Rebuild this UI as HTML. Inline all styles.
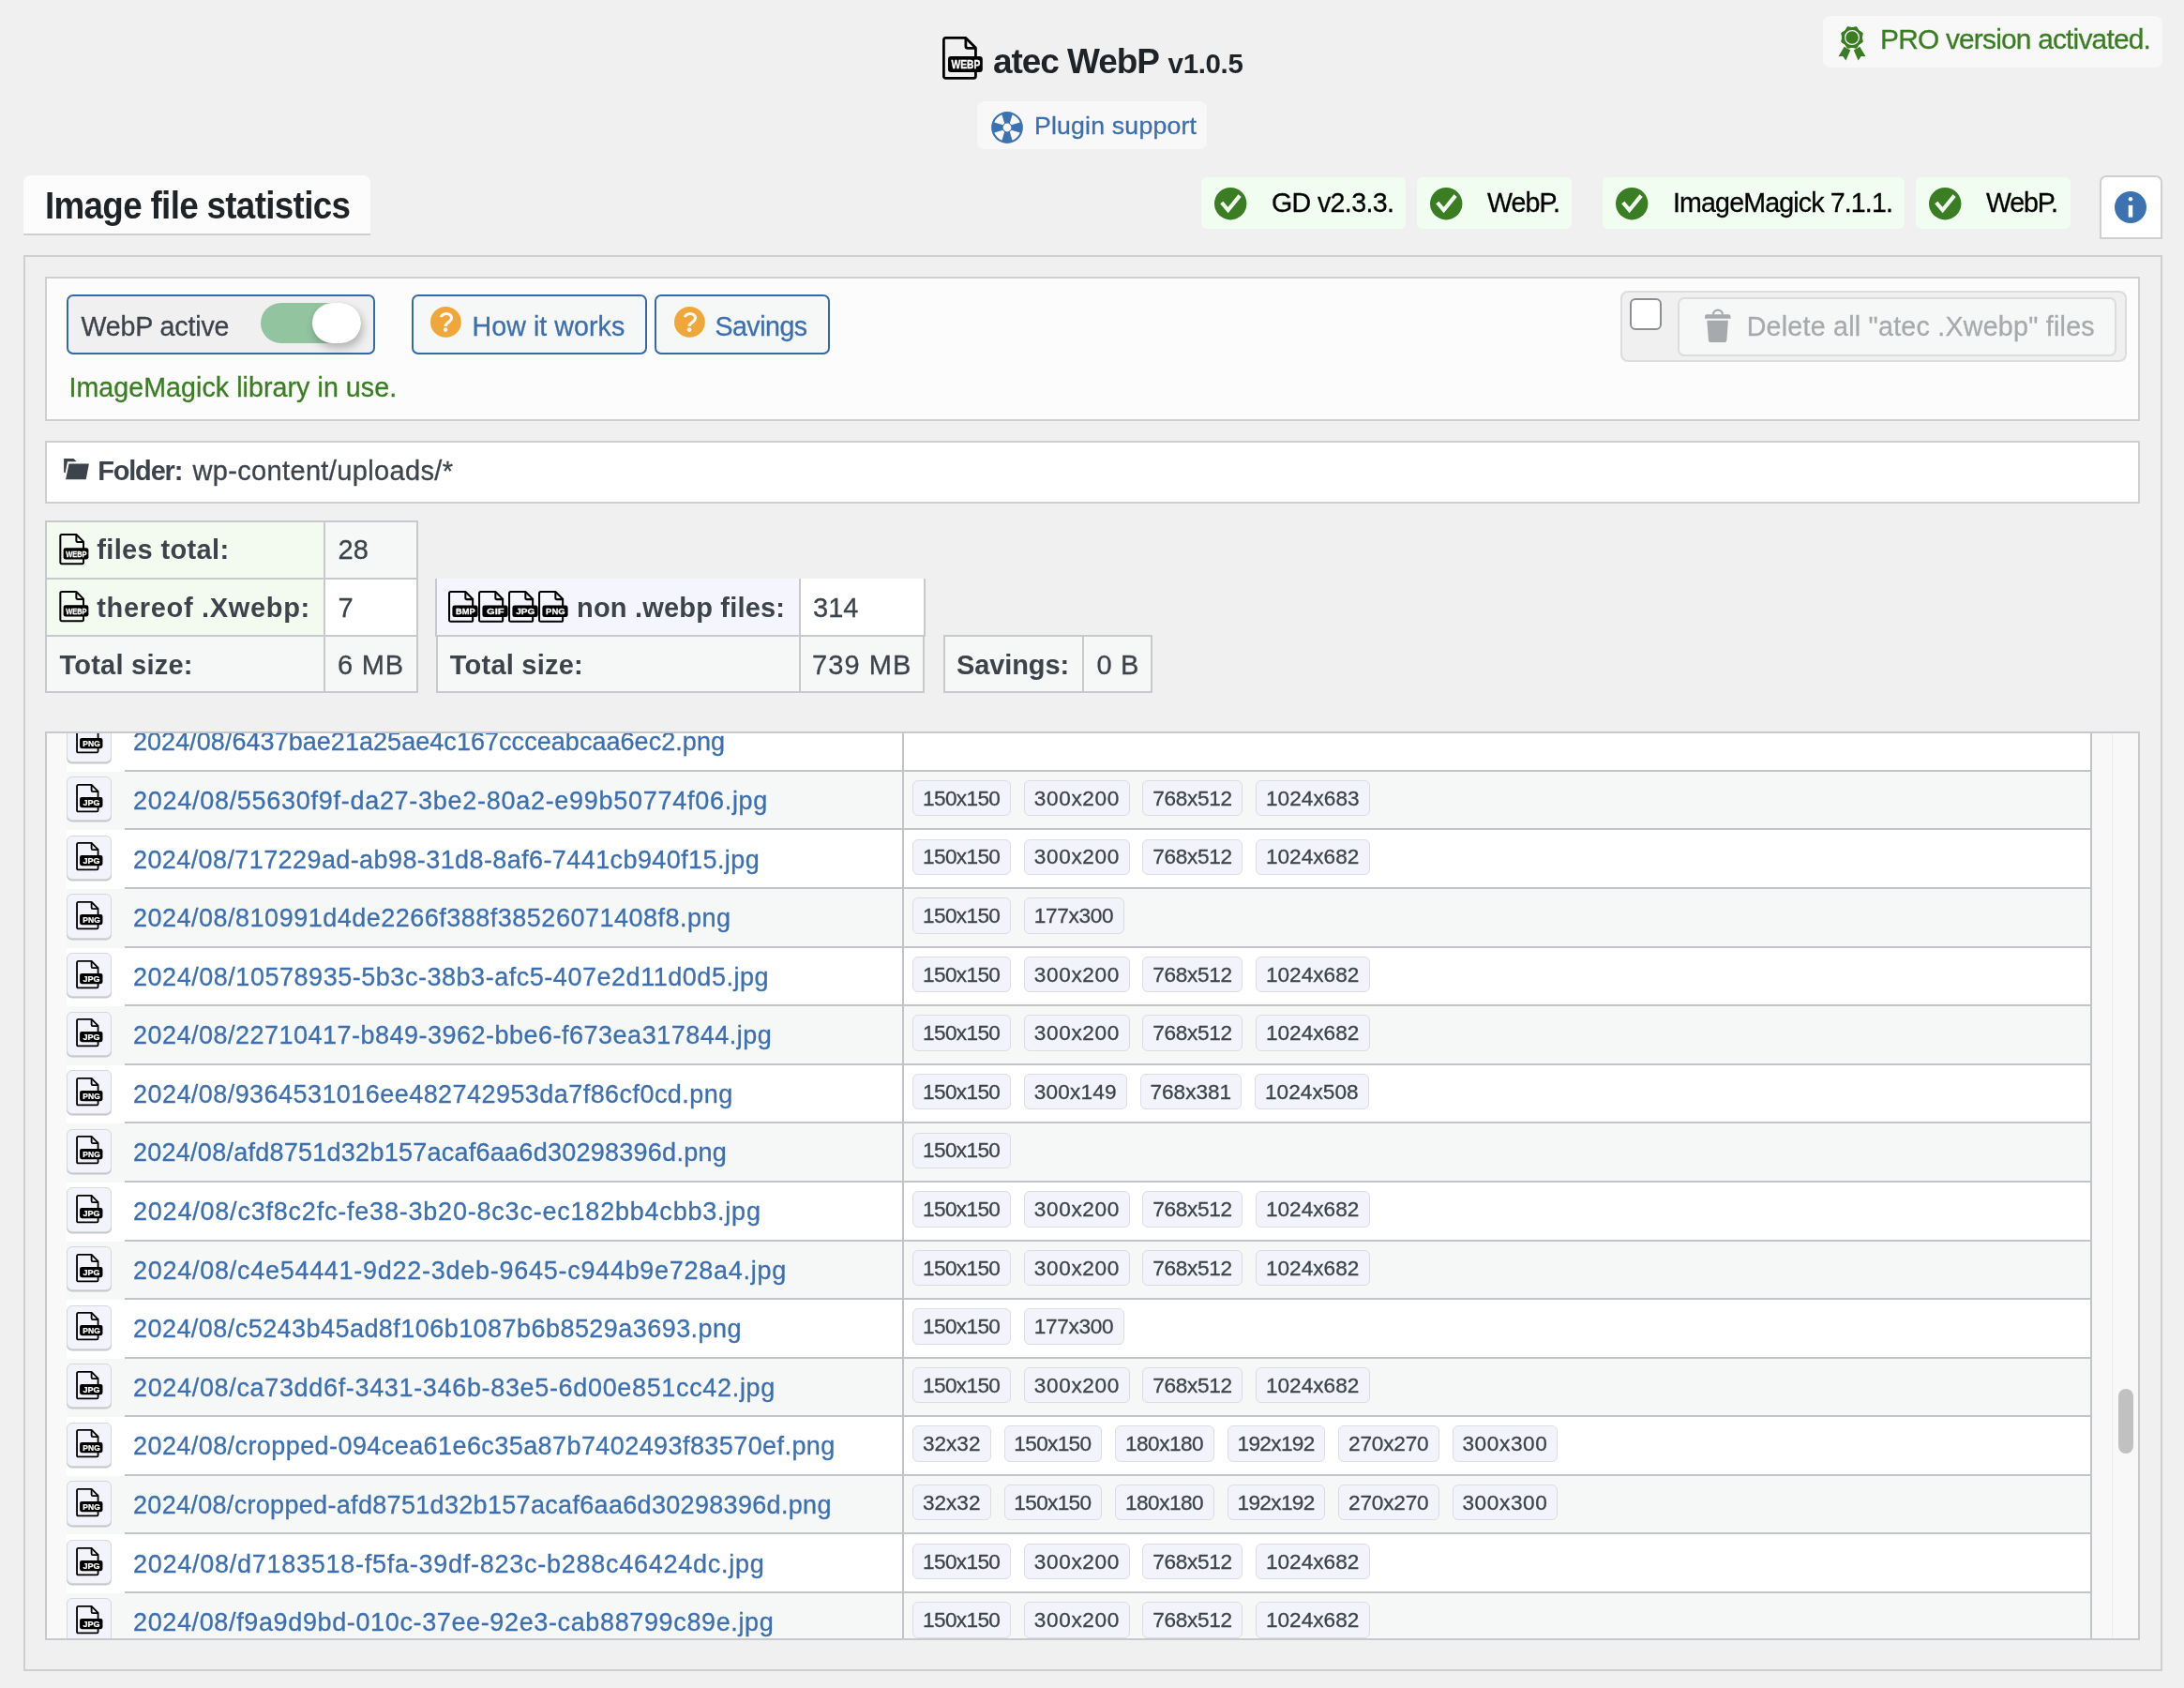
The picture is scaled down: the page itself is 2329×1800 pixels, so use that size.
<!DOCTYPE html><html><head><meta charset="utf-8"><style>
html,body{margin:0;padding:0;}
body{width:2329px;height:1800px;overflow:hidden;background:#f0f0f1;position:relative;font-family:"Liberation Sans",sans-serif;}
.t{position:absolute;white-space:pre;}
.r{position:absolute;box-sizing:border-box;}
#w{position:absolute;left:0;top:0;width:2329px;height:1800px;will-change:transform;}
</style></head><body><div id="w"><svg class="r" style="left:1004.6px;top:39.1px;overflow:visible;overflow:visible" width="42.8" height="45.8" viewBox="0 0 43 46"><path d="M3.4,1.4 H25 L35.6,12 V42.4 Q35.6,44.6 33.4,44.6 H3.6 Q1.4,44.6 1.4,42.4 V3.6 Q1.4,1.4 3.6,1.4 Z" fill="none" stroke="#000" stroke-width="2.8" stroke-linejoin="round"/><path d="M25,1.4 V10.2 Q25,12.4 27.2,12.4 H35.6" fill="none" stroke="#000" stroke-width="2.8" stroke-linejoin="round"/><rect x="6" y="21.2" width="37" height="17" rx="3.2" fill="#000"/><text x="25" y="34.6" text-anchor="middle" font-family="Liberation Sans" font-weight="700" font-size="12.8" textLength="31" lengthAdjust="spacingAndGlyphs" fill="#fff" stroke="#fff" stroke-width="0.35">WEBP</text></svg>
<div class="t" style="left:1059.00px;top:46.97px;font-size:37px;line-height:37px;font-weight:700;color:#1d2327;letter-spacing:-1.050px;">atec WebP</div>
<div class="t" style="left:1245.60px;top:53.32px;font-size:29.5px;line-height:29.5px;font-weight:700;color:#1d2327;letter-spacing:-0.360px;">v1.0.5</div>
<div class="r" style="left:1042px;top:108px;width:245px;height:51px;background:#f8f8f8;border-radius:8px;"></div>
<svg class="r" style="left:1057.2px;top:119.30000000000001px;overflow:visible;" width="34" height="34" viewBox="-17 -17 34 34"><circle cx="0" cy="0" r="16.9" fill="#3d72b0"/><path transform="rotate(0)" d="M5.6,-13.7 A14.8,14.8 0 0 1 13.7,-5.6 L4.5,-2.8 A5.3,5.3 0 0 0 2.8,-4.5 Z" fill="#f8f8f8"/><path transform="rotate(90)" d="M5.6,-13.7 A14.8,14.8 0 0 1 13.7,-5.6 L4.5,-2.8 A5.3,5.3 0 0 0 2.8,-4.5 Z" fill="#f8f8f8"/><path transform="rotate(180)" d="M5.6,-13.7 A14.8,14.8 0 0 1 13.7,-5.6 L4.5,-2.8 A5.3,5.3 0 0 0 2.8,-4.5 Z" fill="#f8f8f8"/><path transform="rotate(270)" d="M5.6,-13.7 A14.8,14.8 0 0 1 13.7,-5.6 L4.5,-2.8 A5.3,5.3 0 0 0 2.8,-4.5 Z" fill="#f8f8f8"/><circle cx="0" cy="0" r="4.4" fill="#f8f8f8"/></svg>
<div class="t" style="left:1103.00px;top:120.79px;font-size:26.7px;line-height:26.7px;font-weight:400;color:#3c6fb0;letter-spacing:0.177px;-webkit-text-stroke:0.3px;">Plugin support</div>
<div class="r" style="left:1944px;top:17px;width:362px;height:55px;background:#f8f8f8;border-radius:8px;"></div>
<svg class="r" style="left:1958.6px;top:26.799999999999997px;overflow:visible;" width="32" height="40" viewBox="-16 -13 32 40"><polygon points="-8.3,9.8 -1.8,13.4 -6.6,24.6 -9.8,19.9 -14.5,20.2" fill="#3a7d22"/><polygon points="8.3,9.8 1.8,13.4 6.6,24.6 9.8,19.9 14.5,20.2" fill="#3a7d22"/><polygon points="0.00,-10.40 4.67,-11.27 7.35,-7.35 11.27,-4.67 10.40,-0.00 11.27,4.67 7.35,7.35 4.67,11.27 0.00,10.40 -4.67,11.27 -7.35,7.35 -11.27,4.67 -10.40,0.00 -11.27,-4.67 -7.35,-7.35 -4.67,-11.27" fill="#3a7d22" stroke="#f8f8f8" stroke-width="1.3" stroke-linejoin="round" paint-order="stroke"/><polygon points="0.00,-10.40 4.67,-11.27 7.35,-7.35 11.27,-4.67 10.40,-0.00 11.27,4.67 7.35,7.35 4.67,11.27 0.00,10.40 -4.67,11.27 -7.35,7.35 -11.27,4.67 -10.40,0.00 -11.27,-4.67 -7.35,-7.35 -4.67,-11.27" fill="#3a7d22" stroke="#3a7d22" stroke-width="1" stroke-linejoin="round"/><circle cx="0" cy="0" r="7.4" fill="none" stroke="#f8f8f8" stroke-width="1.3"/></svg>
<div class="t" style="left:2005.00px;top:27.48px;font-size:29.9px;line-height:29.9px;font-weight:400;color:#3a7d22;letter-spacing:-0.800px;-webkit-text-stroke:0.3px;">PRO version activated.</div>
<div class="r" style="left:25px;top:187px;width:370px;height:64px;background:#fcfcfc;border-top-left-radius:8px;border-top-right-radius:8px;border-bottom:2px solid #cfcfcf;"></div>
<div class="t" style="left:47.60px;top:198.73px;font-size:40px;line-height:40px;font-weight:700;color:#1d2327;letter-spacing:-0.738px;transform:scaleX(0.92);transform-origin:0 0;">Image file statistics</div>
<div class="r" style="left:1281px;top:189px;width:218px;height:55px;background:#f1fdf0;border-radius:6px;"></div>
<svg class="r" style="left:1295.3px;top:200.0px;overflow:visible;" width="34.4" height="34.4" viewBox="-17.2 -17.2 34.4 34.4"><circle cx="0" cy="0" r="17.2" fill="#3a7d22"/><polyline points="-9.4,-1.2 -2.6,6.8 9.9,-8.6" fill="none" stroke="#f1fdf0" stroke-width="4.2" stroke-linejoin="miter" stroke-miterlimit="4"/></svg>
<div class="t" style="left:1356.00px;top:201.78px;font-size:28.6px;line-height:28.6px;font-weight:400;color:#000;letter-spacing:-0.633px;-webkit-text-stroke:0.3px;">GD v2.3.3.</div>
<div class="r" style="left:1511px;top:189px;width:165px;height:55px;background:#f1fdf0;border-radius:6px;"></div>
<svg class="r" style="left:1525.3999999999999px;top:200.0px;overflow:visible;" width="34.4" height="34.4" viewBox="-17.2 -17.2 34.4 34.4"><circle cx="0" cy="0" r="17.2" fill="#3a7d22"/><polyline points="-9.4,-1.2 -2.6,6.8 9.9,-8.6" fill="none" stroke="#f1fdf0" stroke-width="4.2" stroke-linejoin="miter" stroke-miterlimit="4"/></svg>
<div class="t" style="left:1586.00px;top:201.78px;font-size:28.6px;line-height:28.6px;font-weight:400;color:#000;letter-spacing:-0.900px;-webkit-text-stroke:0.3px;">WebP.</div>
<div class="r" style="left:1709px;top:189px;width:322px;height:55px;background:#f1fdf0;border-radius:6px;"></div>
<svg class="r" style="left:1723.3px;top:200.0px;overflow:visible;" width="34.4" height="34.4" viewBox="-17.2 -17.2 34.4 34.4"><circle cx="0" cy="0" r="17.2" fill="#3a7d22"/><polyline points="-9.4,-1.2 -2.6,6.8 9.9,-8.6" fill="none" stroke="#f1fdf0" stroke-width="4.2" stroke-linejoin="miter" stroke-miterlimit="4"/></svg>
<div class="t" style="left:1784.00px;top:201.78px;font-size:28.6px;line-height:28.6px;font-weight:400;color:#000;letter-spacing:-0.859px;-webkit-text-stroke:0.3px;">ImageMagick 7.1.1.</div>
<div class="r" style="left:2043px;top:189px;width:165px;height:55px;background:#f1fdf0;border-radius:6px;"></div>
<svg class="r" style="left:2056.8px;top:200.0px;overflow:visible;" width="34.4" height="34.4" viewBox="-17.2 -17.2 34.4 34.4"><circle cx="0" cy="0" r="17.2" fill="#3a7d22"/><polyline points="-9.4,-1.2 -2.6,6.8 9.9,-8.6" fill="none" stroke="#f1fdf0" stroke-width="4.2" stroke-linejoin="miter" stroke-miterlimit="4"/></svg>
<div class="t" style="left:2118.00px;top:201.78px;font-size:28.6px;line-height:28.6px;font-weight:400;color:#000;letter-spacing:-1.150px;-webkit-text-stroke:0.3px;">WebP.</div>
<div class="r" style="left:2239px;top:187px;width:67px;height:68px;background:#fff;border:2px solid #cfcfcf;border-top-left-radius:7px;border-top-right-radius:7px;"></div>
<svg class="r" style="left:2255px;top:204.2px;overflow:visible;" width="34" height="34" viewBox="-17 -17 34 34"><circle r="17" fill="#3d72b0"/><circle cx="0" cy="-8.7" r="2.2" fill="#fff"/><rect x="-2.3" y="-2.2" width="4.6" height="12.8" fill="#fff"/></svg>
<div class="r" style="left:25px;top:272px;width:2281px;height:1510px;border:2px solid #cfcfcf;"></div>
<div class="r" style="left:48px;top:295px;width:2234px;height:154px;background:#fcfcfc;border:2px solid #cfcfcf;"></div>
<div class="r" style="left:71px;top:314px;width:329px;height:64px;background:#f0f0f1;border:2px solid #3469ab;border-radius:7px;"></div>
<div class="t" style="left:86.50px;top:333.78px;font-size:28.6px;line-height:28.6px;font-weight:400;color:#3c434a;letter-spacing:-0.150px;-webkit-text-stroke:0.3px;">WebP active</div>
<div class="r" style="left:278px;top:323.4px;width:107px;height:43.10000000000002px;background:#92c4a0;border-radius:22px;"></div>
<div class="r" style="left:333px;top:323.4px;width:52px;height:43.10000000000002px;background:#fff;border-radius:21.5px;box-shadow:2px 5px 10px rgba(0,0,0,0.26);"></div>
<div class="r" style="left:438.5px;top:314px;width:251.0px;height:64px;background:#f6f7f7;border:2px solid #3469ab;border-radius:7px;"></div>
<svg class="r" style="left:459.40000000000003px;top:326.70000000000005px;overflow:visible;" width="32.8" height="32.8" viewBox="-16.4 -16.4 32.8 32.8"><circle cx="0" cy="0" r="16.4" fill="#f0a73a"/><path d="M-5.0,-5.2 C-4.0,-9.0 1.5,-10.0 4.5,-7.6 C7.2,-5.4 6.4,-2.2 3.5,-0.2 C0.9,1.6 -0.3,2.4 -0.4,4.4" fill="none" stroke="#f6f7f7" stroke-width="3.1"/><circle cx="-0.3" cy="8.2" r="2.3" fill="#f6f7f7"/></svg>
<div class="t" style="left:503.60px;top:333.78px;font-size:28.6px;line-height:28.6px;font-weight:400;color:#3c6fb0;letter-spacing:0.055px;-webkit-text-stroke:0.3px;">How it works</div>
<div class="r" style="left:698px;top:314px;width:187px;height:64px;background:#f6f7f7;border:2px solid #3469ab;border-radius:7px;"></div>
<svg class="r" style="left:719.2px;top:326.70000000000005px;overflow:visible;" width="32.8" height="32.8" viewBox="-16.4 -16.4 32.8 32.8"><circle cx="0" cy="0" r="16.4" fill="#f0a73a"/><path d="M-5.0,-5.2 C-4.0,-9.0 1.5,-10.0 4.5,-7.6 C7.2,-5.4 6.4,-2.2 3.5,-0.2 C0.9,1.6 -0.3,2.4 -0.4,4.4" fill="none" stroke="#f6f7f7" stroke-width="3.1"/><circle cx="-0.3" cy="8.2" r="2.3" fill="#f6f7f7"/></svg>
<div class="t" style="left:762.40px;top:333.78px;font-size:28.6px;line-height:28.6px;font-weight:400;color:#3c6fb0;letter-spacing:-0.500px;-webkit-text-stroke:0.3px;">Savings</div>
<div class="t" style="left:73.40px;top:398.58px;font-size:28.6px;line-height:28.6px;font-weight:400;color:#3a7d22;letter-spacing:0.065px;-webkit-text-stroke:0.3px;">ImageMagick library in use.</div>
<div class="r" style="left:1728px;top:310px;width:540px;height:76px;background:#f0f0f1;border:2px solid #dcdcde;border-radius:8px;"></div>
<div class="r" style="left:1738px;top:318px;width:34px;height:34px;background:#fff;border:2px solid #8c8f94;border-radius:6px;"></div>
<div class="r" style="left:1789px;top:316.5px;width:468px;height:63.0px;background:#f6f7f7;border:2px solid #dcdcde;border-radius:7px;"></div>
<svg class="r" style="left:1817px;top:330px;overflow:visible;" width="30" height="36" viewBox="1817 330 30 36"><path d="M1826.9,335.6 A5.05,5.05 0 0 1 1837,335.6" fill="none" stroke="#a7aaad" stroke-width="2.2"/><path d="M1818,339.7 V337.5 Q1818,335.3 1820.2,335.3 H1843.3 Q1845.5,335.3 1845.5,337.5 V339.7 Z" fill="#a7aaad"/><path d="M1820.3,341.8 H1842.9 L1841.4,362.4 Q1841.2,365 1838.6,365 H1824.7 Q1822.1,365 1821.9,362.4 Z" fill="#a7aaad"/></svg>
<div class="t" style="left:1862.70px;top:333.58px;font-size:28.6px;line-height:28.6px;font-weight:400;color:#a7aaad;letter-spacing:0.252px;-webkit-text-stroke:0.3px;">Delete all "atec .Xwebp" files</div>
<div class="r" style="left:48px;top:470px;width:2234px;height:67px;background:#fff;border:2px solid #cfcfcf;"></div>
<svg class="r" style="left:66px;top:486px;overflow:visible;" width="32" height="28" viewBox="66 486 32 28"><path d="M68.1,489 H78.6 L81.6,492.3 H72 L69.6,504.4 L68.1,503.6 Z" fill="#3c434a"/><path d="M73.5,494.4 H94.9 L91.7,511.2 H70.1 Z" fill="#3c434a"/></svg>
<div class="t" style="left:104.20px;top:487.55px;font-size:29px;line-height:29px;font-weight:700;color:#3c434a;letter-spacing:-1.183px;">Folder:</div>
<div class="t" style="left:205.40px;top:487.55px;font-size:29px;line-height:29px;font-weight:400;color:#3c434a;letter-spacing:0.353px;-webkit-text-stroke:0.3px;">wp-content/uploads/*</div>
<div class="r" style="left:48px;top:554.5px;width:299px;height:63.0px;background:#f3fbf0;border:2px solid #c8c9cc;"></div>
<div class="r" style="left:345px;top:554.5px;width:101px;height:63.0px;background:#f6f7f7;border:2px solid #c8c9cc;"></div>
<div class="r" style="left:48px;top:615.5px;width:299px;height:63.5px;background:#f3fbf0;border:2px solid #c8c9cc;"></div>
<div class="r" style="left:345px;top:615.5px;width:101px;height:63.5px;background:#ffffff;border:2px solid #c8c9cc;"></div>
<div class="r" style="left:48px;top:677px;width:299px;height:62px;background:#f6f7f7;border:2px solid #c8c9cc;"></div>
<div class="r" style="left:345px;top:677px;width:101px;height:62px;background:#f6f7f7;border:2px solid #c8c9cc;"></div>
<svg class="r" style="left:62.8px;top:568.8px;overflow:visible;overflow:visible" width="31.7" height="33.2" viewBox="0 0 43 46"><path d="M3.4,1.4 H25 L35.6,12 V42.4 Q35.6,44.6 33.4,44.6 H3.6 Q1.4,44.6 1.4,42.4 V3.6 Q1.4,1.4 3.6,1.4 Z" fill="none" stroke="#000" stroke-width="2.8" stroke-linejoin="round"/><path d="M25,1.4 V10.2 Q25,12.4 27.2,12.4 H35.6" fill="none" stroke="#000" stroke-width="2.8" stroke-linejoin="round"/><rect x="6" y="21.2" width="37" height="17" rx="3.2" fill="#000"/><text x="25" y="34.6" text-anchor="middle" font-family="Liberation Sans" font-weight="700" font-size="12.8" textLength="31" lengthAdjust="spacingAndGlyphs" fill="#fff" stroke="#fff" stroke-width="0.35">WEBP</text></svg>
<div class="t" style="left:103.20px;top:572.45px;font-size:29px;line-height:29px;font-weight:700;color:#3c434a;letter-spacing:0.364px;">files total:</div>
<div class="t" style="left:360.50px;top:572.45px;font-size:29px;line-height:29px;font-weight:400;color:#3c434a;letter-spacing:0.000px;-webkit-text-stroke:0.3px;">28</div>
<svg class="r" style="left:62.8px;top:629.5px;overflow:visible;overflow:visible" width="31.7" height="33.2" viewBox="0 0 43 46"><path d="M3.4,1.4 H25 L35.6,12 V42.4 Q35.6,44.6 33.4,44.6 H3.6 Q1.4,44.6 1.4,42.4 V3.6 Q1.4,1.4 3.6,1.4 Z" fill="none" stroke="#000" stroke-width="2.8" stroke-linejoin="round"/><path d="M25,1.4 V10.2 Q25,12.4 27.2,12.4 H35.6" fill="none" stroke="#000" stroke-width="2.8" stroke-linejoin="round"/><rect x="6" y="21.2" width="37" height="17" rx="3.2" fill="#000"/><text x="25" y="34.6" text-anchor="middle" font-family="Liberation Sans" font-weight="700" font-size="12.8" textLength="31" lengthAdjust="spacingAndGlyphs" fill="#fff" stroke="#fff" stroke-width="0.35">WEBP</text></svg>
<div class="t" style="left:103.20px;top:633.65px;font-size:29px;line-height:29px;font-weight:700;color:#3c434a;letter-spacing:0.679px;">thereof .Xwebp:</div>
<div class="t" style="left:360.50px;top:633.65px;font-size:29px;line-height:29px;font-weight:400;color:#3c434a;letter-spacing:0.000px;-webkit-text-stroke:0.3px;">7</div>
<div class="t" style="left:63.50px;top:694.95px;font-size:29px;line-height:29px;font-weight:700;color:#3c434a;letter-spacing:0.230px;">Total size:</div>
<div class="t" style="left:360.00px;top:694.95px;font-size:29px;line-height:29px;font-weight:400;color:#3c434a;letter-spacing:0.767px;-webkit-text-stroke:0.3px;">6 MB</div>
<div class="r" style="left:464px;top:617px;width:390px;height:62px;background:#f5f5fe;border:2px solid #c8c9cc;border-top:none;"></div>
<div class="r" style="left:852px;top:617px;width:135px;height:62px;background:#ffffff;border:2px solid #c8c9cc;border-top:none;"></div>
<div class="r" style="left:464.5px;top:677px;width:389.5px;height:62px;background:#f6f7f7;border:2px solid #c8c9cc;"></div>
<div class="r" style="left:852px;top:677px;width:134px;height:62px;background:#f6f7f7;border:2px solid #c8c9cc;"></div>
<svg class="r" style="left:478.2px;top:630.2px;overflow:visible;overflow:visible" width="31.6" height="33.8" viewBox="0 0 43 46"><path d="M3.4,1.4 H25 L35.6,12 V42.4 Q35.6,44.6 33.4,44.6 H3.6 Q1.4,44.6 1.4,42.4 V3.6 Q1.4,1.4 3.6,1.4 Z" fill="none" stroke="#000" stroke-width="2.8" stroke-linejoin="round"/><path d="M25,1.4 V10.2 Q25,12.4 27.2,12.4 H35.6" fill="none" stroke="#000" stroke-width="2.8" stroke-linejoin="round"/><rect x="6" y="21.2" width="37" height="17" rx="3.2" fill="#000"/><text x="25" y="34.6" text-anchor="middle" font-family="Liberation Sans" font-weight="700" font-size="12.8" textLength="28" lengthAdjust="spacingAndGlyphs" fill="#fff" stroke="#fff" stroke-width="0.35">BMP</text></svg>
<svg class="r" style="left:510.09999999999997px;top:630.2px;overflow:visible;overflow:visible" width="31.6" height="33.8" viewBox="0 0 43 46"><path d="M3.4,1.4 H25 L35.6,12 V42.4 Q35.6,44.6 33.4,44.6 H3.6 Q1.4,44.6 1.4,42.4 V3.6 Q1.4,1.4 3.6,1.4 Z" fill="none" stroke="#000" stroke-width="2.8" stroke-linejoin="round"/><path d="M25,1.4 V10.2 Q25,12.4 27.2,12.4 H35.6" fill="none" stroke="#000" stroke-width="2.8" stroke-linejoin="round"/><rect x="6" y="21.2" width="37" height="17" rx="3.2" fill="#000"/><text x="25" y="34.6" text-anchor="middle" font-family="Liberation Sans" font-weight="700" font-size="12.8" textLength="25.2" lengthAdjust="spacingAndGlyphs" fill="#fff" stroke="#fff" stroke-width="0.35">GIF</text></svg>
<svg class="r" style="left:542.0px;top:630.2px;overflow:visible;overflow:visible" width="31.6" height="33.8" viewBox="0 0 43 46"><path d="M3.4,1.4 H25 L35.6,12 V42.4 Q35.6,44.6 33.4,44.6 H3.6 Q1.4,44.6 1.4,42.4 V3.6 Q1.4,1.4 3.6,1.4 Z" fill="none" stroke="#000" stroke-width="2.8" stroke-linejoin="round"/><path d="M25,1.4 V10.2 Q25,12.4 27.2,12.4 H35.6" fill="none" stroke="#000" stroke-width="2.8" stroke-linejoin="round"/><rect x="6" y="21.2" width="37" height="17" rx="3.2" fill="#000"/><text x="25" y="34.6" text-anchor="middle" font-family="Liberation Sans" font-weight="700" font-size="12.8" textLength="27.6" lengthAdjust="spacingAndGlyphs" fill="#fff" stroke="#fff" stroke-width="0.35">JPG</text></svg>
<svg class="r" style="left:573.9px;top:630.2px;overflow:visible;overflow:visible" width="31.6" height="33.8" viewBox="0 0 43 46"><path d="M3.4,1.4 H25 L35.6,12 V42.4 Q35.6,44.6 33.4,44.6 H3.6 Q1.4,44.6 1.4,42.4 V3.6 Q1.4,1.4 3.6,1.4 Z" fill="none" stroke="#000" stroke-width="2.8" stroke-linejoin="round"/><path d="M25,1.4 V10.2 Q25,12.4 27.2,12.4 H35.6" fill="none" stroke="#000" stroke-width="2.8" stroke-linejoin="round"/><rect x="6" y="21.2" width="37" height="17" rx="3.2" fill="#000"/><text x="25" y="34.6" text-anchor="middle" font-family="Liberation Sans" font-weight="700" font-size="12.8" textLength="28" lengthAdjust="spacingAndGlyphs" fill="#fff" stroke="#fff" stroke-width="0.35">PNG</text></svg>
<div class="t" style="left:615.00px;top:633.65px;font-size:29px;line-height:29px;font-weight:700;color:#3c434a;letter-spacing:0.193px;">non .webp files:</div>
<div class="t" style="left:867.00px;top:633.65px;font-size:29px;line-height:29px;font-weight:400;color:#3c434a;letter-spacing:0.000px;-webkit-text-stroke:0.3px;">314</div>
<div class="t" style="left:479.80px;top:694.95px;font-size:29px;line-height:29px;font-weight:700;color:#3c434a;letter-spacing:0.230px;">Total size:</div>
<div class="t" style="left:866.00px;top:694.95px;font-size:29px;line-height:29px;font-weight:400;color:#3c434a;letter-spacing:1.080px;-webkit-text-stroke:0.3px;">739 MB</div>
<div class="r" style="left:1005.5px;top:677px;width:150.5px;height:62px;background:#f6f7f7;border:2px solid #c8c9cc;"></div>
<div class="r" style="left:1154px;top:677px;width:75px;height:62px;background:#f6f7f7;border:2px solid #c8c9cc;"></div>
<div class="t" style="left:1020.00px;top:694.95px;font-size:29px;line-height:29px;font-weight:700;color:#3c434a;letter-spacing:-0.100px;">Savings:</div>
<div class="t" style="left:1169.50px;top:694.95px;font-size:29px;line-height:29px;font-weight:400;color:#3c434a;letter-spacing:0.600px;-webkit-text-stroke:0.3px;">0 B</div>
<div class="r" style="left:48px;top:780px;width:2234px;height:969px;background:#f9f9f9;border:2px solid #c8c9cc;"></div>
<div class="r" style="left:50px;top:782px;width:2230px;height:965px;overflow:hidden;">
<div class="r" style="left:21px;top:-21.790000000000077px;width:2160px;height:62.59000000000003px;background:#ffffff;"></div>
<div class="r" style="left:83px;top:38.799999999999955px;width:830px;height:2.0px;background:#c3c4c7;"></div>
<div class="r" style="left:913px;top:38.799999999999955px;width:1268px;height:2.0px;background:#c3c4c7;"></div>
<div class="r" style="left:21.200000000000003px;top:-16.3900000000001px;width:47.39999999999999px;height:47.30000000000007px;background:#f3f3fb;border:1.5px solid #d6d7da;border-radius:6px;box-shadow:0 1.5px 0 #c6c7ca;"></div>
<svg class="r" style="left:31.200000000000003px;top:-8.690000000000055px;overflow:visible;overflow:visible" width="28.6" height="30.3" viewBox="0 0 43 46"><path d="M3.4,1.4 H25 L35.6,12 V42.4 Q35.6,44.6 33.4,44.6 H3.6 Q1.4,44.6 1.4,42.4 V3.6 Q1.4,1.4 3.6,1.4 Z" fill="none" stroke="#000" stroke-width="2.8" stroke-linejoin="round"/><path d="M25,1.4 V10.2 Q25,12.4 27.2,12.4 H35.6" fill="none" stroke="#000" stroke-width="2.8" stroke-linejoin="round"/><rect x="6" y="21.2" width="37" height="17" rx="3.2" fill="#000"/><text x="25" y="34.6" text-anchor="middle" font-family="Liberation Sans" font-weight="700" font-size="12.8" textLength="28" lengthAdjust="spacingAndGlyphs" fill="#fff" stroke="#fff" stroke-width="0.35">PNG</text></svg>
<div class="t" style="left:92.00px;top:-3.65px;font-size:27px;line-height:27px;font-weight:400;color:#3c6fb0;letter-spacing:0.044px;-webkit-text-stroke:0.3px;">2024/08/6437bae21a25ae4c167ccceabcaa6ec2.png</div>
<div class="r" style="left:21px;top:40.799999999999955px;width:2160px;height:62.59000000000003px;background:#f6f7f7;"></div>
<div class="r" style="left:83px;top:101.38999999999999px;width:830px;height:2.0px;background:#c3c4c7;"></div>
<div class="r" style="left:913px;top:101.38999999999999px;width:1268px;height:2.0px;background:#c3c4c7;"></div>
<div class="r" style="left:21.200000000000003px;top:46.19999999999993px;width:47.39999999999999px;height:47.30000000000007px;background:#f3f3fb;border:1.5px solid #d6d7da;border-radius:6px;box-shadow:0 1.5px 0 #c6c7ca;"></div>
<svg class="r" style="left:31.200000000000003px;top:53.89999999999998px;overflow:visible;overflow:visible" width="28.6" height="30.3" viewBox="0 0 43 46"><path d="M3.4,1.4 H25 L35.6,12 V42.4 Q35.6,44.6 33.4,44.6 H3.6 Q1.4,44.6 1.4,42.4 V3.6 Q1.4,1.4 3.6,1.4 Z" fill="none" stroke="#000" stroke-width="2.8" stroke-linejoin="round"/><path d="M25,1.4 V10.2 Q25,12.4 27.2,12.4 H35.6" fill="none" stroke="#000" stroke-width="2.8" stroke-linejoin="round"/><rect x="6" y="21.2" width="37" height="17" rx="3.2" fill="#000"/><text x="25" y="34.6" text-anchor="middle" font-family="Liberation Sans" font-weight="700" font-size="12.8" textLength="27.6" lengthAdjust="spacingAndGlyphs" fill="#fff" stroke="#fff" stroke-width="0.35">JPG</text></svg>
<div class="t" style="left:92.00px;top:58.94px;font-size:27px;line-height:27px;font-weight:400;color:#3c6fb0;letter-spacing:0.719px;-webkit-text-stroke:0.3px;">2024/08/55630f9f-da27-3be2-80a2-e99b50774f06.jpg</div>
<div class="r" style="left:923.3px;top:50.0px;width:104.79999999999995px;height:38.39999999999998px;background:#f2f3fb;border:1.5px solid #dcdde0;border-radius:6px;"></div>
<div class="t" style="left:934.10px;top:58.86px;font-size:22.6px;line-height:22.6px;font-weight:400;color:#3c434a;letter-spacing:-0.650px;-webkit-text-stroke:0.3px;">150x150</div>
<div class="r" style="left:1041.8999999999999px;top:50.0px;width:112.70000000000005px;height:38.39999999999998px;background:#f2f3fb;border:1.5px solid #dcdde0;border-radius:6px;"></div>
<div class="t" style="left:1052.70px;top:58.86px;font-size:22.6px;line-height:22.6px;font-weight:400;color:#3c434a;letter-spacing:0.667px;-webkit-text-stroke:0.3px;">300x200</div>
<div class="r" style="left:1168.3999999999999px;top:50.0px;width:106.90000000000009px;height:38.39999999999998px;background:#f2f3fb;border:1.5px solid #dcdde0;border-radius:6px;"></div>
<div class="t" style="left:1179.20px;top:58.86px;font-size:22.6px;line-height:22.6px;font-weight:400;color:#3c434a;letter-spacing:-0.300px;-webkit-text-stroke:0.3px;">768x512</div>
<div class="r" style="left:1289.1px;top:50.0px;width:121.79999999999995px;height:38.39999999999998px;background:#f2f3fb;border:1.5px solid #dcdde0;border-radius:6px;"></div>
<div class="t" style="left:1299.90px;top:58.86px;font-size:22.6px;line-height:22.6px;font-weight:400;color:#3c434a;letter-spacing:0.071px;-webkit-text-stroke:0.3px;">1024x683</div>
<div class="r" style="left:21px;top:103.38999999999987px;width:2160px;height:62.59000000000003px;background:#ffffff;"></div>
<div class="r" style="left:83px;top:163.9799999999999px;width:830px;height:2.0px;background:#c3c4c7;"></div>
<div class="r" style="left:913px;top:163.9799999999999px;width:1268px;height:2.0px;background:#c3c4c7;"></div>
<div class="r" style="left:21.200000000000003px;top:108.78999999999985px;width:47.39999999999999px;height:47.30000000000007px;background:#f3f3fb;border:1.5px solid #d6d7da;border-radius:6px;box-shadow:0 1.5px 0 #c6c7ca;"></div>
<svg class="r" style="left:31.200000000000003px;top:116.4899999999999px;overflow:visible;overflow:visible" width="28.6" height="30.3" viewBox="0 0 43 46"><path d="M3.4,1.4 H25 L35.6,12 V42.4 Q35.6,44.6 33.4,44.6 H3.6 Q1.4,44.6 1.4,42.4 V3.6 Q1.4,1.4 3.6,1.4 Z" fill="none" stroke="#000" stroke-width="2.8" stroke-linejoin="round"/><path d="M25,1.4 V10.2 Q25,12.4 27.2,12.4 H35.6" fill="none" stroke="#000" stroke-width="2.8" stroke-linejoin="round"/><rect x="6" y="21.2" width="37" height="17" rx="3.2" fill="#000"/><text x="25" y="34.6" text-anchor="middle" font-family="Liberation Sans" font-weight="700" font-size="12.8" textLength="27.6" lengthAdjust="spacingAndGlyphs" fill="#fff" stroke="#fff" stroke-width="0.35">JPG</text></svg>
<div class="t" style="left:92.00px;top:121.53px;font-size:27px;line-height:27px;font-weight:400;color:#3c6fb0;letter-spacing:0.406px;-webkit-text-stroke:0.3px;">2024/08/717229ad-ab98-31d8-8af6-7441cb940f15.jpg</div>
<div class="r" style="left:923.3px;top:112.58999999999992px;width:104.79999999999995px;height:38.39999999999998px;background:#f2f3fb;border:1.5px solid #dcdde0;border-radius:6px;"></div>
<div class="t" style="left:934.10px;top:121.45px;font-size:22.6px;line-height:22.6px;font-weight:400;color:#3c434a;letter-spacing:-0.650px;-webkit-text-stroke:0.3px;">150x150</div>
<div class="r" style="left:1041.8999999999999px;top:112.58999999999992px;width:112.70000000000005px;height:38.39999999999998px;background:#f2f3fb;border:1.5px solid #dcdde0;border-radius:6px;"></div>
<div class="t" style="left:1052.70px;top:121.45px;font-size:22.6px;line-height:22.6px;font-weight:400;color:#3c434a;letter-spacing:0.667px;-webkit-text-stroke:0.3px;">300x200</div>
<div class="r" style="left:1168.3999999999999px;top:112.58999999999992px;width:106.90000000000009px;height:38.39999999999998px;background:#f2f3fb;border:1.5px solid #dcdde0;border-radius:6px;"></div>
<div class="t" style="left:1179.20px;top:121.45px;font-size:22.6px;line-height:22.6px;font-weight:400;color:#3c434a;letter-spacing:-0.300px;-webkit-text-stroke:0.3px;">768x512</div>
<div class="r" style="left:1289.1px;top:112.58999999999992px;width:121.5px;height:38.39999999999998px;background:#f2f3fb;border:1.5px solid #dcdde0;border-radius:6px;"></div>
<div class="t" style="left:1299.90px;top:121.45px;font-size:22.6px;line-height:22.6px;font-weight:400;color:#3c434a;letter-spacing:0.029px;-webkit-text-stroke:0.3px;">1024x682</div>
<div class="r" style="left:21px;top:165.9799999999999px;width:2160px;height:62.59000000000003px;background:#f6f7f7;"></div>
<div class="r" style="left:83px;top:226.56999999999994px;width:830px;height:2.0px;background:#c3c4c7;"></div>
<div class="r" style="left:913px;top:226.56999999999994px;width:1268px;height:2.0px;background:#c3c4c7;"></div>
<div class="r" style="left:21.200000000000003px;top:171.37999999999988px;width:47.39999999999999px;height:47.30000000000007px;background:#f3f3fb;border:1.5px solid #d6d7da;border-radius:6px;box-shadow:0 1.5px 0 #c6c7ca;"></div>
<svg class="r" style="left:31.200000000000003px;top:179.07999999999993px;overflow:visible;overflow:visible" width="28.6" height="30.3" viewBox="0 0 43 46"><path d="M3.4,1.4 H25 L35.6,12 V42.4 Q35.6,44.6 33.4,44.6 H3.6 Q1.4,44.6 1.4,42.4 V3.6 Q1.4,1.4 3.6,1.4 Z" fill="none" stroke="#000" stroke-width="2.8" stroke-linejoin="round"/><path d="M25,1.4 V10.2 Q25,12.4 27.2,12.4 H35.6" fill="none" stroke="#000" stroke-width="2.8" stroke-linejoin="round"/><rect x="6" y="21.2" width="37" height="17" rx="3.2" fill="#000"/><text x="25" y="34.6" text-anchor="middle" font-family="Liberation Sans" font-weight="700" font-size="12.8" textLength="28" lengthAdjust="spacingAndGlyphs" fill="#fff" stroke="#fff" stroke-width="0.35">PNG</text></svg>
<div class="t" style="left:92.00px;top:184.12px;font-size:27px;line-height:27px;font-weight:400;color:#3c6fb0;letter-spacing:0.498px;-webkit-text-stroke:0.3px;">2024/08/810991d4de2266f388f38526071408f8.png</div>
<div class="r" style="left:923.3px;top:175.17999999999995px;width:104.79999999999995px;height:38.39999999999998px;background:#f2f3fb;border:1.5px solid #dcdde0;border-radius:6px;"></div>
<div class="t" style="left:934.10px;top:184.04px;font-size:22.6px;line-height:22.6px;font-weight:400;color:#3c434a;letter-spacing:-0.650px;-webkit-text-stroke:0.3px;">150x150</div>
<div class="r" style="left:1041.8999999999999px;top:175.17999999999995px;width:106.79999999999995px;height:38.39999999999998px;background:#f2f3fb;border:1.5px solid #dcdde0;border-radius:6px;"></div>
<div class="t" style="left:1052.70px;top:184.04px;font-size:22.6px;line-height:22.6px;font-weight:400;color:#3c434a;letter-spacing:-0.317px;-webkit-text-stroke:0.3px;">177x300</div>
<div class="r" style="left:21px;top:228.56999999999994px;width:2160px;height:62.58999999999992px;background:#ffffff;"></div>
<div class="r" style="left:83px;top:289.15999999999985px;width:830px;height:2.0px;background:#c3c4c7;"></div>
<div class="r" style="left:913px;top:289.15999999999985px;width:1268px;height:2.0px;background:#c3c4c7;"></div>
<div class="r" style="left:21.200000000000003px;top:233.9699999999999px;width:47.39999999999999px;height:47.30000000000007px;background:#f3f3fb;border:1.5px solid #d6d7da;border-radius:6px;box-shadow:0 1.5px 0 #c6c7ca;"></div>
<svg class="r" style="left:31.200000000000003px;top:241.66999999999996px;overflow:visible;overflow:visible" width="28.6" height="30.3" viewBox="0 0 43 46"><path d="M3.4,1.4 H25 L35.6,12 V42.4 Q35.6,44.6 33.4,44.6 H3.6 Q1.4,44.6 1.4,42.4 V3.6 Q1.4,1.4 3.6,1.4 Z" fill="none" stroke="#000" stroke-width="2.8" stroke-linejoin="round"/><path d="M25,1.4 V10.2 Q25,12.4 27.2,12.4 H35.6" fill="none" stroke="#000" stroke-width="2.8" stroke-linejoin="round"/><rect x="6" y="21.2" width="37" height="17" rx="3.2" fill="#000"/><text x="25" y="34.6" text-anchor="middle" font-family="Liberation Sans" font-weight="700" font-size="12.8" textLength="27.6" lengthAdjust="spacingAndGlyphs" fill="#fff" stroke="#fff" stroke-width="0.35">JPG</text></svg>
<div class="t" style="left:92.00px;top:246.71px;font-size:27px;line-height:27px;font-weight:400;color:#3c6fb0;letter-spacing:0.532px;-webkit-text-stroke:0.3px;">2024/08/10578935-5b3c-38b3-afc5-407e2d11d0d5.jpg</div>
<div class="r" style="left:923.3px;top:237.76999999999998px;width:104.79999999999995px;height:38.399999999999864px;background:#f2f3fb;border:1.5px solid #dcdde0;border-radius:6px;"></div>
<div class="t" style="left:934.10px;top:246.63px;font-size:22.6px;line-height:22.6px;font-weight:400;color:#3c434a;letter-spacing:-0.650px;-webkit-text-stroke:0.3px;">150x150</div>
<div class="r" style="left:1041.8999999999999px;top:237.76999999999998px;width:112.70000000000005px;height:38.399999999999864px;background:#f2f3fb;border:1.5px solid #dcdde0;border-radius:6px;"></div>
<div class="t" style="left:1052.70px;top:246.63px;font-size:22.6px;line-height:22.6px;font-weight:400;color:#3c434a;letter-spacing:0.667px;-webkit-text-stroke:0.3px;">300x200</div>
<div class="r" style="left:1168.3999999999999px;top:237.76999999999998px;width:106.90000000000009px;height:38.399999999999864px;background:#f2f3fb;border:1.5px solid #dcdde0;border-radius:6px;"></div>
<div class="t" style="left:1179.20px;top:246.63px;font-size:22.6px;line-height:22.6px;font-weight:400;color:#3c434a;letter-spacing:-0.300px;-webkit-text-stroke:0.3px;">768x512</div>
<div class="r" style="left:1289.1px;top:237.76999999999998px;width:121.5px;height:38.399999999999864px;background:#f2f3fb;border:1.5px solid #dcdde0;border-radius:6px;"></div>
<div class="t" style="left:1299.90px;top:246.63px;font-size:22.6px;line-height:22.6px;font-weight:400;color:#3c434a;letter-spacing:0.029px;-webkit-text-stroke:0.3px;">1024x682</div>
<div class="r" style="left:21px;top:291.15999999999985px;width:2160px;height:62.58999999999992px;background:#f6f7f7;"></div>
<div class="r" style="left:83px;top:351.7499999999998px;width:830px;height:2.0px;background:#c3c4c7;"></div>
<div class="r" style="left:913px;top:351.7499999999998px;width:1268px;height:2.0px;background:#c3c4c7;"></div>
<div class="r" style="left:21.200000000000003px;top:296.55999999999995px;width:47.39999999999999px;height:47.299999999999955px;background:#f3f3fb;border:1.5px solid #d6d7da;border-radius:6px;box-shadow:0 1.5px 0 #c6c7ca;"></div>
<svg class="r" style="left:31.200000000000003px;top:304.25999999999976px;overflow:visible;overflow:visible" width="28.6" height="30.3" viewBox="0 0 43 46"><path d="M3.4,1.4 H25 L35.6,12 V42.4 Q35.6,44.6 33.4,44.6 H3.6 Q1.4,44.6 1.4,42.4 V3.6 Q1.4,1.4 3.6,1.4 Z" fill="none" stroke="#000" stroke-width="2.8" stroke-linejoin="round"/><path d="M25,1.4 V10.2 Q25,12.4 27.2,12.4 H35.6" fill="none" stroke="#000" stroke-width="2.8" stroke-linejoin="round"/><rect x="6" y="21.2" width="37" height="17" rx="3.2" fill="#000"/><text x="25" y="34.6" text-anchor="middle" font-family="Liberation Sans" font-weight="700" font-size="12.8" textLength="27.6" lengthAdjust="spacingAndGlyphs" fill="#fff" stroke="#fff" stroke-width="0.35">JPG</text></svg>
<div class="t" style="left:92.00px;top:309.30px;font-size:27px;line-height:27px;font-weight:400;color:#3c6fb0;letter-spacing:0.491px;-webkit-text-stroke:0.3px;">2024/08/22710417-b849-3962-bbe6-f673ea317844.jpg</div>
<div class="r" style="left:923.3px;top:300.3599999999999px;width:104.79999999999995px;height:38.399999999999864px;background:#f2f3fb;border:1.5px solid #dcdde0;border-radius:6px;"></div>
<div class="t" style="left:934.10px;top:309.22px;font-size:22.6px;line-height:22.6px;font-weight:400;color:#3c434a;letter-spacing:-0.650px;-webkit-text-stroke:0.3px;">150x150</div>
<div class="r" style="left:1041.8999999999999px;top:300.3599999999999px;width:112.70000000000005px;height:38.399999999999864px;background:#f2f3fb;border:1.5px solid #dcdde0;border-radius:6px;"></div>
<div class="t" style="left:1052.70px;top:309.22px;font-size:22.6px;line-height:22.6px;font-weight:400;color:#3c434a;letter-spacing:0.667px;-webkit-text-stroke:0.3px;">300x200</div>
<div class="r" style="left:1168.3999999999999px;top:300.3599999999999px;width:106.90000000000009px;height:38.399999999999864px;background:#f2f3fb;border:1.5px solid #dcdde0;border-radius:6px;"></div>
<div class="t" style="left:1179.20px;top:309.22px;font-size:22.6px;line-height:22.6px;font-weight:400;color:#3c434a;letter-spacing:-0.300px;-webkit-text-stroke:0.3px;">768x512</div>
<div class="r" style="left:1289.1px;top:300.3599999999999px;width:121.5px;height:38.399999999999864px;background:#f2f3fb;border:1.5px solid #dcdde0;border-radius:6px;"></div>
<div class="t" style="left:1299.90px;top:309.22px;font-size:22.6px;line-height:22.6px;font-weight:400;color:#3c434a;letter-spacing:0.029px;-webkit-text-stroke:0.3px;">1024x682</div>
<div class="r" style="left:21px;top:353.75px;width:2160px;height:62.58999999999992px;background:#ffffff;"></div>
<div class="r" style="left:83px;top:414.3399999999999px;width:830px;height:2.0px;background:#c3c4c7;"></div>
<div class="r" style="left:913px;top:414.3399999999999px;width:1268px;height:2.0px;background:#c3c4c7;"></div>
<div class="r" style="left:21.200000000000003px;top:359.1500000000001px;width:47.39999999999999px;height:47.299999999999955px;background:#f3f3fb;border:1.5px solid #d6d7da;border-radius:6px;box-shadow:0 1.5px 0 #c6c7ca;"></div>
<svg class="r" style="left:31.200000000000003px;top:366.8499999999999px;overflow:visible;overflow:visible" width="28.6" height="30.3" viewBox="0 0 43 46"><path d="M3.4,1.4 H25 L35.6,12 V42.4 Q35.6,44.6 33.4,44.6 H3.6 Q1.4,44.6 1.4,42.4 V3.6 Q1.4,1.4 3.6,1.4 Z" fill="none" stroke="#000" stroke-width="2.8" stroke-linejoin="round"/><path d="M25,1.4 V10.2 Q25,12.4 27.2,12.4 H35.6" fill="none" stroke="#000" stroke-width="2.8" stroke-linejoin="round"/><rect x="6" y="21.2" width="37" height="17" rx="3.2" fill="#000"/><text x="25" y="34.6" text-anchor="middle" font-family="Liberation Sans" font-weight="700" font-size="12.8" textLength="28" lengthAdjust="spacingAndGlyphs" fill="#fff" stroke="#fff" stroke-width="0.35">PNG</text></svg>
<div class="t" style="left:92.00px;top:371.89px;font-size:27px;line-height:27px;font-weight:400;color:#3c6fb0;letter-spacing:0.444px;-webkit-text-stroke:0.3px;">2024/08/9364531016ee482742953da7f86cf0cd.png</div>
<div class="r" style="left:923.3px;top:362.95000000000005px;width:104.79999999999995px;height:38.399999999999864px;background:#f2f3fb;border:1.5px solid #dcdde0;border-radius:6px;"></div>
<div class="t" style="left:934.10px;top:371.81px;font-size:22.6px;line-height:22.6px;font-weight:400;color:#3c434a;letter-spacing:-0.650px;-webkit-text-stroke:0.3px;">150x150</div>
<div class="r" style="left:1041.8999999999999px;top:362.95000000000005px;width:109.90000000000009px;height:38.399999999999864px;background:#f2f3fb;border:1.5px solid #dcdde0;border-radius:6px;"></div>
<div class="t" style="left:1052.70px;top:371.81px;font-size:22.6px;line-height:22.6px;font-weight:400;color:#3c434a;letter-spacing:0.200px;-webkit-text-stroke:0.3px;">300x149</div>
<div class="r" style="left:1165.6px;top:362.95000000000005px;width:108.79999999999995px;height:38.399999999999864px;background:#f2f3fb;border:1.5px solid #dcdde0;border-radius:6px;"></div>
<div class="t" style="left:1176.40px;top:371.81px;font-size:22.6px;line-height:22.6px;font-weight:400;color:#3c434a;letter-spacing:0.017px;-webkit-text-stroke:0.3px;">768x381</div>
<div class="r" style="left:1288.1999999999998px;top:362.95000000000005px;width:121.59999999999991px;height:38.399999999999864px;background:#f2f3fb;border:1.5px solid #dcdde0;border-radius:6px;"></div>
<div class="t" style="left:1299.00px;top:371.81px;font-size:22.6px;line-height:22.6px;font-weight:400;color:#3c434a;letter-spacing:0.043px;-webkit-text-stroke:0.3px;">1024x508</div>
<div class="r" style="left:21px;top:416.3399999999999px;width:2160px;height:62.58999999999992px;background:#f6f7f7;"></div>
<div class="r" style="left:83px;top:476.92999999999984px;width:830px;height:2.0px;background:#c3c4c7;"></div>
<div class="r" style="left:913px;top:476.92999999999984px;width:1268px;height:2.0px;background:#c3c4c7;"></div>
<div class="r" style="left:21.200000000000003px;top:421.74px;width:47.39999999999999px;height:47.299999999999955px;background:#f3f3fb;border:1.5px solid #d6d7da;border-radius:6px;box-shadow:0 1.5px 0 #c6c7ca;"></div>
<svg class="r" style="left:31.200000000000003px;top:429.4399999999998px;overflow:visible;overflow:visible" width="28.6" height="30.3" viewBox="0 0 43 46"><path d="M3.4,1.4 H25 L35.6,12 V42.4 Q35.6,44.6 33.4,44.6 H3.6 Q1.4,44.6 1.4,42.4 V3.6 Q1.4,1.4 3.6,1.4 Z" fill="none" stroke="#000" stroke-width="2.8" stroke-linejoin="round"/><path d="M25,1.4 V10.2 Q25,12.4 27.2,12.4 H35.6" fill="none" stroke="#000" stroke-width="2.8" stroke-linejoin="round"/><rect x="6" y="21.2" width="37" height="17" rx="3.2" fill="#000"/><text x="25" y="34.6" text-anchor="middle" font-family="Liberation Sans" font-weight="700" font-size="12.8" textLength="28" lengthAdjust="spacingAndGlyphs" fill="#fff" stroke="#fff" stroke-width="0.35">PNG</text></svg>
<div class="t" style="left:92.00px;top:434.48px;font-size:27px;line-height:27px;font-weight:400;color:#3c6fb0;letter-spacing:0.258px;-webkit-text-stroke:0.3px;">2024/08/afd8751d32b157acaf6aa6d30298396d.png</div>
<div class="r" style="left:923.3px;top:425.53999999999996px;width:104.79999999999995px;height:38.399999999999864px;background:#f2f3fb;border:1.5px solid #dcdde0;border-radius:6px;"></div>
<div class="t" style="left:934.10px;top:434.40px;font-size:22.6px;line-height:22.6px;font-weight:400;color:#3c434a;letter-spacing:-0.650px;-webkit-text-stroke:0.3px;">150x150</div>
<div class="r" style="left:21px;top:478.92999999999984px;width:2160px;height:62.58999999999992px;background:#ffffff;"></div>
<div class="r" style="left:83px;top:539.5199999999998px;width:830px;height:2.0px;background:#c3c4c7;"></div>
<div class="r" style="left:913px;top:539.5199999999998px;width:1268px;height:2.0px;background:#c3c4c7;"></div>
<div class="r" style="left:21.200000000000003px;top:484.3299999999999px;width:47.39999999999999px;height:47.299999999999955px;background:#f3f3fb;border:1.5px solid #d6d7da;border-radius:6px;box-shadow:0 1.5px 0 #c6c7ca;"></div>
<svg class="r" style="left:31.200000000000003px;top:492.02999999999975px;overflow:visible;overflow:visible" width="28.6" height="30.3" viewBox="0 0 43 46"><path d="M3.4,1.4 H25 L35.6,12 V42.4 Q35.6,44.6 33.4,44.6 H3.6 Q1.4,44.6 1.4,42.4 V3.6 Q1.4,1.4 3.6,1.4 Z" fill="none" stroke="#000" stroke-width="2.8" stroke-linejoin="round"/><path d="M25,1.4 V10.2 Q25,12.4 27.2,12.4 H35.6" fill="none" stroke="#000" stroke-width="2.8" stroke-linejoin="round"/><rect x="6" y="21.2" width="37" height="17" rx="3.2" fill="#000"/><text x="25" y="34.6" text-anchor="middle" font-family="Liberation Sans" font-weight="700" font-size="12.8" textLength="27.6" lengthAdjust="spacingAndGlyphs" fill="#fff" stroke="#fff" stroke-width="0.35">JPG</text></svg>
<div class="t" style="left:92.00px;top:497.07px;font-size:27px;line-height:27px;font-weight:400;color:#3c6fb0;letter-spacing:0.787px;-webkit-text-stroke:0.3px;">2024/08/c3f8c2fc-fe38-3b20-8c3c-ec182bb4cbb3.jpg</div>
<div class="r" style="left:923.3px;top:488.1299999999999px;width:104.79999999999995px;height:38.399999999999864px;background:#f2f3fb;border:1.5px solid #dcdde0;border-radius:6px;"></div>
<div class="t" style="left:934.10px;top:496.99px;font-size:22.6px;line-height:22.6px;font-weight:400;color:#3c434a;letter-spacing:-0.650px;-webkit-text-stroke:0.3px;">150x150</div>
<div class="r" style="left:1041.8999999999999px;top:488.1299999999999px;width:112.70000000000005px;height:38.399999999999864px;background:#f2f3fb;border:1.5px solid #dcdde0;border-radius:6px;"></div>
<div class="t" style="left:1052.70px;top:496.99px;font-size:22.6px;line-height:22.6px;font-weight:400;color:#3c434a;letter-spacing:0.667px;-webkit-text-stroke:0.3px;">300x200</div>
<div class="r" style="left:1168.3999999999999px;top:488.1299999999999px;width:106.90000000000009px;height:38.399999999999864px;background:#f2f3fb;border:1.5px solid #dcdde0;border-radius:6px;"></div>
<div class="t" style="left:1179.20px;top:496.99px;font-size:22.6px;line-height:22.6px;font-weight:400;color:#3c434a;letter-spacing:-0.300px;-webkit-text-stroke:0.3px;">768x512</div>
<div class="r" style="left:1289.1px;top:488.1299999999999px;width:121.5px;height:38.399999999999864px;background:#f2f3fb;border:1.5px solid #dcdde0;border-radius:6px;"></div>
<div class="t" style="left:1299.90px;top:496.99px;font-size:22.6px;line-height:22.6px;font-weight:400;color:#3c434a;letter-spacing:0.029px;-webkit-text-stroke:0.3px;">1024x682</div>
<div class="r" style="left:21px;top:541.52px;width:2160px;height:62.58999999999992px;background:#f6f7f7;"></div>
<div class="r" style="left:83px;top:602.1099999999999px;width:830px;height:2.0px;background:#c3c4c7;"></div>
<div class="r" style="left:913px;top:602.1099999999999px;width:1268px;height:2.0px;background:#c3c4c7;"></div>
<div class="r" style="left:21.200000000000003px;top:546.9200000000001px;width:47.39999999999999px;height:47.299999999999955px;background:#f3f3fb;border:1.5px solid #d6d7da;border-radius:6px;box-shadow:0 1.5px 0 #c6c7ca;"></div>
<svg class="r" style="left:31.200000000000003px;top:554.6199999999999px;overflow:visible;overflow:visible" width="28.6" height="30.3" viewBox="0 0 43 46"><path d="M3.4,1.4 H25 L35.6,12 V42.4 Q35.6,44.6 33.4,44.6 H3.6 Q1.4,44.6 1.4,42.4 V3.6 Q1.4,1.4 3.6,1.4 Z" fill="none" stroke="#000" stroke-width="2.8" stroke-linejoin="round"/><path d="M25,1.4 V10.2 Q25,12.4 27.2,12.4 H35.6" fill="none" stroke="#000" stroke-width="2.8" stroke-linejoin="round"/><rect x="6" y="21.2" width="37" height="17" rx="3.2" fill="#000"/><text x="25" y="34.6" text-anchor="middle" font-family="Liberation Sans" font-weight="700" font-size="12.8" textLength="27.6" lengthAdjust="spacingAndGlyphs" fill="#fff" stroke="#fff" stroke-width="0.35">JPG</text></svg>
<div class="t" style="left:92.00px;top:559.66px;font-size:27px;line-height:27px;font-weight:400;color:#3c6fb0;letter-spacing:0.728px;-webkit-text-stroke:0.3px;">2024/08/c4e54441-9d22-3deb-9645-c944b9e728a4.jpg</div>
<div class="r" style="left:923.3px;top:550.72px;width:104.79999999999995px;height:38.399999999999864px;background:#f2f3fb;border:1.5px solid #dcdde0;border-radius:6px;"></div>
<div class="t" style="left:934.10px;top:559.58px;font-size:22.6px;line-height:22.6px;font-weight:400;color:#3c434a;letter-spacing:-0.650px;-webkit-text-stroke:0.3px;">150x150</div>
<div class="r" style="left:1041.8999999999999px;top:550.72px;width:112.70000000000005px;height:38.399999999999864px;background:#f2f3fb;border:1.5px solid #dcdde0;border-radius:6px;"></div>
<div class="t" style="left:1052.70px;top:559.58px;font-size:22.6px;line-height:22.6px;font-weight:400;color:#3c434a;letter-spacing:0.667px;-webkit-text-stroke:0.3px;">300x200</div>
<div class="r" style="left:1168.3999999999999px;top:550.72px;width:106.90000000000009px;height:38.399999999999864px;background:#f2f3fb;border:1.5px solid #dcdde0;border-radius:6px;"></div>
<div class="t" style="left:1179.20px;top:559.58px;font-size:22.6px;line-height:22.6px;font-weight:400;color:#3c434a;letter-spacing:-0.300px;-webkit-text-stroke:0.3px;">768x512</div>
<div class="r" style="left:1289.1px;top:550.72px;width:121.5px;height:38.399999999999864px;background:#f2f3fb;border:1.5px solid #dcdde0;border-radius:6px;"></div>
<div class="t" style="left:1299.90px;top:559.58px;font-size:22.6px;line-height:22.6px;font-weight:400;color:#3c434a;letter-spacing:0.029px;-webkit-text-stroke:0.3px;">1024x682</div>
<div class="r" style="left:21px;top:604.1100000000001px;width:2160px;height:62.58999999999992px;background:#ffffff;"></div>
<div class="r" style="left:83px;top:664.7px;width:830px;height:2.0px;background:#c3c4c7;"></div>
<div class="r" style="left:913px;top:664.7px;width:1268px;height:2.0px;background:#c3c4c7;"></div>
<div class="r" style="left:21.200000000000003px;top:609.5100000000002px;width:47.39999999999999px;height:47.299999999999955px;background:#f3f3fb;border:1.5px solid #d6d7da;border-radius:6px;box-shadow:0 1.5px 0 #c6c7ca;"></div>
<svg class="r" style="left:31.200000000000003px;top:617.21px;overflow:visible;overflow:visible" width="28.6" height="30.3" viewBox="0 0 43 46"><path d="M3.4,1.4 H25 L35.6,12 V42.4 Q35.6,44.6 33.4,44.6 H3.6 Q1.4,44.6 1.4,42.4 V3.6 Q1.4,1.4 3.6,1.4 Z" fill="none" stroke="#000" stroke-width="2.8" stroke-linejoin="round"/><path d="M25,1.4 V10.2 Q25,12.4 27.2,12.4 H35.6" fill="none" stroke="#000" stroke-width="2.8" stroke-linejoin="round"/><rect x="6" y="21.2" width="37" height="17" rx="3.2" fill="#000"/><text x="25" y="34.6" text-anchor="middle" font-family="Liberation Sans" font-weight="700" font-size="12.8" textLength="28" lengthAdjust="spacingAndGlyphs" fill="#fff" stroke="#fff" stroke-width="0.35">PNG</text></svg>
<div class="t" style="left:92.00px;top:622.25px;font-size:27px;line-height:27px;font-weight:400;color:#3c6fb0;letter-spacing:0.451px;-webkit-text-stroke:0.3px;">2024/08/c5243b45ad8f106b1087b6b8529a3693.png</div>
<div class="r" style="left:923.3px;top:613.3100000000002px;width:104.79999999999995px;height:38.399999999999864px;background:#f2f3fb;border:1.5px solid #dcdde0;border-radius:6px;"></div>
<div class="t" style="left:934.10px;top:622.17px;font-size:22.6px;line-height:22.6px;font-weight:400;color:#3c434a;letter-spacing:-0.650px;-webkit-text-stroke:0.3px;">150x150</div>
<div class="r" style="left:1041.8999999999999px;top:613.3100000000002px;width:106.79999999999995px;height:38.399999999999864px;background:#f2f3fb;border:1.5px solid #dcdde0;border-radius:6px;"></div>
<div class="t" style="left:1052.70px;top:622.17px;font-size:22.6px;line-height:22.6px;font-weight:400;color:#3c434a;letter-spacing:-0.317px;-webkit-text-stroke:0.3px;">177x300</div>
<div class="r" style="left:21px;top:666.6999999999998px;width:2160px;height:62.58999999999992px;background:#f6f7f7;"></div>
<div class="r" style="left:83px;top:727.2899999999997px;width:830px;height:2.0px;background:#c3c4c7;"></div>
<div class="r" style="left:913px;top:727.2899999999997px;width:1268px;height:2.0px;background:#c3c4c7;"></div>
<div class="r" style="left:21.200000000000003px;top:672.0999999999999px;width:47.39999999999999px;height:47.299999999999955px;background:#f3f3fb;border:1.5px solid #d6d7da;border-radius:6px;box-shadow:0 1.5px 0 #c6c7ca;"></div>
<svg class="r" style="left:31.200000000000003px;top:679.7999999999997px;overflow:visible;overflow:visible" width="28.6" height="30.3" viewBox="0 0 43 46"><path d="M3.4,1.4 H25 L35.6,12 V42.4 Q35.6,44.6 33.4,44.6 H3.6 Q1.4,44.6 1.4,42.4 V3.6 Q1.4,1.4 3.6,1.4 Z" fill="none" stroke="#000" stroke-width="2.8" stroke-linejoin="round"/><path d="M25,1.4 V10.2 Q25,12.4 27.2,12.4 H35.6" fill="none" stroke="#000" stroke-width="2.8" stroke-linejoin="round"/><rect x="6" y="21.2" width="37" height="17" rx="3.2" fill="#000"/><text x="25" y="34.6" text-anchor="middle" font-family="Liberation Sans" font-weight="700" font-size="12.8" textLength="27.6" lengthAdjust="spacingAndGlyphs" fill="#fff" stroke="#fff" stroke-width="0.35">JPG</text></svg>
<div class="t" style="left:92.00px;top:684.84px;font-size:27px;line-height:27px;font-weight:400;color:#3c6fb0;letter-spacing:0.664px;-webkit-text-stroke:0.3px;">2024/08/ca73dd6f-3431-346b-83e5-6d00e851cc42.jpg</div>
<div class="r" style="left:923.3px;top:675.8999999999999px;width:104.79999999999995px;height:38.399999999999864px;background:#f2f3fb;border:1.5px solid #dcdde0;border-radius:6px;"></div>
<div class="t" style="left:934.10px;top:684.76px;font-size:22.6px;line-height:22.6px;font-weight:400;color:#3c434a;letter-spacing:-0.650px;-webkit-text-stroke:0.3px;">150x150</div>
<div class="r" style="left:1041.8999999999999px;top:675.8999999999999px;width:112.70000000000005px;height:38.399999999999864px;background:#f2f3fb;border:1.5px solid #dcdde0;border-radius:6px;"></div>
<div class="t" style="left:1052.70px;top:684.76px;font-size:22.6px;line-height:22.6px;font-weight:400;color:#3c434a;letter-spacing:0.667px;-webkit-text-stroke:0.3px;">300x200</div>
<div class="r" style="left:1168.3999999999999px;top:675.8999999999999px;width:106.90000000000009px;height:38.399999999999864px;background:#f2f3fb;border:1.5px solid #dcdde0;border-radius:6px;"></div>
<div class="t" style="left:1179.20px;top:684.76px;font-size:22.6px;line-height:22.6px;font-weight:400;color:#3c434a;letter-spacing:-0.300px;-webkit-text-stroke:0.3px;">768x512</div>
<div class="r" style="left:1289.1px;top:675.8999999999999px;width:121.5px;height:38.399999999999864px;background:#f2f3fb;border:1.5px solid #dcdde0;border-radius:6px;"></div>
<div class="t" style="left:1299.90px;top:684.76px;font-size:22.6px;line-height:22.6px;font-weight:400;color:#3c434a;letter-spacing:0.029px;-webkit-text-stroke:0.3px;">1024x682</div>
<div class="r" style="left:21px;top:729.29px;width:2160px;height:62.58999999999992px;background:#ffffff;"></div>
<div class="r" style="left:83px;top:789.8799999999999px;width:830px;height:2.0px;background:#c3c4c7;"></div>
<div class="r" style="left:913px;top:789.8799999999999px;width:1268px;height:2.0px;background:#c3c4c7;"></div>
<div class="r" style="left:21.200000000000003px;top:734.69px;width:47.39999999999999px;height:47.299999999999955px;background:#f3f3fb;border:1.5px solid #d6d7da;border-radius:6px;box-shadow:0 1.5px 0 #c6c7ca;"></div>
<svg class="r" style="left:31.200000000000003px;top:742.3899999999999px;overflow:visible;overflow:visible" width="28.6" height="30.3" viewBox="0 0 43 46"><path d="M3.4,1.4 H25 L35.6,12 V42.4 Q35.6,44.6 33.4,44.6 H3.6 Q1.4,44.6 1.4,42.4 V3.6 Q1.4,1.4 3.6,1.4 Z" fill="none" stroke="#000" stroke-width="2.8" stroke-linejoin="round"/><path d="M25,1.4 V10.2 Q25,12.4 27.2,12.4 H35.6" fill="none" stroke="#000" stroke-width="2.8" stroke-linejoin="round"/><rect x="6" y="21.2" width="37" height="17" rx="3.2" fill="#000"/><text x="25" y="34.6" text-anchor="middle" font-family="Liberation Sans" font-weight="700" font-size="12.8" textLength="28" lengthAdjust="spacingAndGlyphs" fill="#fff" stroke="#fff" stroke-width="0.35">PNG</text></svg>
<div class="t" style="left:92.00px;top:747.43px;font-size:27px;line-height:27px;font-weight:400;color:#3c6fb0;letter-spacing:0.424px;-webkit-text-stroke:0.3px;">2024/08/cropped-094cea61e6c35a87b7402493f83570ef.png</div>
<div class="r" style="left:923.3px;top:738.49px;width:83.40000000000009px;height:38.399999999999864px;background:#f2f3fb;border:1.5px solid #dcdde0;border-radius:6px;"></div>
<div class="t" style="left:934.10px;top:747.35px;font-size:22.6px;line-height:22.6px;font-weight:400;color:#3c434a;letter-spacing:-0.050px;-webkit-text-stroke:0.3px;">32x32</div>
<div class="r" style="left:1020.5px;top:738.49px;width:104.79999999999995px;height:38.399999999999864px;background:#f2f3fb;border:1.5px solid #dcdde0;border-radius:6px;"></div>
<div class="t" style="left:1031.30px;top:747.35px;font-size:22.6px;line-height:22.6px;font-weight:400;color:#3c434a;letter-spacing:-0.650px;-webkit-text-stroke:0.3px;">150x150</div>
<div class="r" style="left:1139.1px;top:738.49px;width:105.79999999999995px;height:38.399999999999864px;background:#f2f3fb;border:1.5px solid #dcdde0;border-radius:6px;"></div>
<div class="t" style="left:1149.90px;top:747.35px;font-size:22.6px;line-height:22.6px;font-weight:400;color:#3c434a;letter-spacing:-0.483px;-webkit-text-stroke:0.3px;">180x180</div>
<div class="r" style="left:1258.6999999999998px;top:738.49px;width:104.79999999999995px;height:38.399999999999864px;background:#f2f3fb;border:1.5px solid #dcdde0;border-radius:6px;"></div>
<div class="t" style="left:1269.50px;top:747.35px;font-size:22.6px;line-height:22.6px;font-weight:400;color:#3c434a;letter-spacing:-0.650px;-webkit-text-stroke:0.3px;">192x192</div>
<div class="r" style="left:1377.2999999999997px;top:738.49px;width:107.5px;height:38.399999999999864px;background:#f2f3fb;border:1.5px solid #dcdde0;border-radius:6px;"></div>
<div class="t" style="left:1388.10px;top:747.35px;font-size:22.6px;line-height:22.6px;font-weight:400;color:#3c434a;letter-spacing:-0.200px;-webkit-text-stroke:0.3px;">270x270</div>
<div class="r" style="left:1498.5999999999997px;top:738.49px;width:112.5px;height:38.399999999999864px;background:#f2f3fb;border:1.5px solid #dcdde0;border-radius:6px;"></div>
<div class="t" style="left:1509.40px;top:747.35px;font-size:22.6px;line-height:22.6px;font-weight:400;color:#3c434a;letter-spacing:0.633px;-webkit-text-stroke:0.3px;">300x300</div>
<div class="r" style="left:21px;top:791.8800000000001px;width:2160px;height:62.58999999999992px;background:#f6f7f7;"></div>
<div class="r" style="left:83px;top:852.47px;width:830px;height:2.0px;background:#c3c4c7;"></div>
<div class="r" style="left:913px;top:852.47px;width:1268px;height:2.0px;background:#c3c4c7;"></div>
<div class="r" style="left:21.200000000000003px;top:797.2800000000002px;width:47.39999999999999px;height:47.299999999999955px;background:#f3f3fb;border:1.5px solid #d6d7da;border-radius:6px;box-shadow:0 1.5px 0 #c6c7ca;"></div>
<svg class="r" style="left:31.200000000000003px;top:804.98px;overflow:visible;overflow:visible" width="28.6" height="30.3" viewBox="0 0 43 46"><path d="M3.4,1.4 H25 L35.6,12 V42.4 Q35.6,44.6 33.4,44.6 H3.6 Q1.4,44.6 1.4,42.4 V3.6 Q1.4,1.4 3.6,1.4 Z" fill="none" stroke="#000" stroke-width="2.8" stroke-linejoin="round"/><path d="M25,1.4 V10.2 Q25,12.4 27.2,12.4 H35.6" fill="none" stroke="#000" stroke-width="2.8" stroke-linejoin="round"/><rect x="6" y="21.2" width="37" height="17" rx="3.2" fill="#000"/><text x="25" y="34.6" text-anchor="middle" font-family="Liberation Sans" font-weight="700" font-size="12.8" textLength="28" lengthAdjust="spacingAndGlyphs" fill="#fff" stroke="#fff" stroke-width="0.35">PNG</text></svg>
<div class="t" style="left:92.00px;top:810.02px;font-size:27px;line-height:27px;font-weight:400;color:#3c6fb0;letter-spacing:0.318px;-webkit-text-stroke:0.3px;">2024/08/cropped-afd8751d32b157acaf6aa6d30298396d.png</div>
<div class="r" style="left:923.3px;top:801.0800000000002px;width:83.40000000000009px;height:38.399999999999864px;background:#f2f3fb;border:1.5px solid #dcdde0;border-radius:6px;"></div>
<div class="t" style="left:934.10px;top:809.94px;font-size:22.6px;line-height:22.6px;font-weight:400;color:#3c434a;letter-spacing:-0.050px;-webkit-text-stroke:0.3px;">32x32</div>
<div class="r" style="left:1020.5px;top:801.0800000000002px;width:104.79999999999995px;height:38.399999999999864px;background:#f2f3fb;border:1.5px solid #dcdde0;border-radius:6px;"></div>
<div class="t" style="left:1031.30px;top:809.94px;font-size:22.6px;line-height:22.6px;font-weight:400;color:#3c434a;letter-spacing:-0.650px;-webkit-text-stroke:0.3px;">150x150</div>
<div class="r" style="left:1139.1px;top:801.0800000000002px;width:105.79999999999995px;height:38.399999999999864px;background:#f2f3fb;border:1.5px solid #dcdde0;border-radius:6px;"></div>
<div class="t" style="left:1149.90px;top:809.94px;font-size:22.6px;line-height:22.6px;font-weight:400;color:#3c434a;letter-spacing:-0.483px;-webkit-text-stroke:0.3px;">180x180</div>
<div class="r" style="left:1258.6999999999998px;top:801.0800000000002px;width:104.79999999999995px;height:38.399999999999864px;background:#f2f3fb;border:1.5px solid #dcdde0;border-radius:6px;"></div>
<div class="t" style="left:1269.50px;top:809.94px;font-size:22.6px;line-height:22.6px;font-weight:400;color:#3c434a;letter-spacing:-0.650px;-webkit-text-stroke:0.3px;">192x192</div>
<div class="r" style="left:1377.2999999999997px;top:801.0800000000002px;width:107.5px;height:38.399999999999864px;background:#f2f3fb;border:1.5px solid #dcdde0;border-radius:6px;"></div>
<div class="t" style="left:1388.10px;top:809.94px;font-size:22.6px;line-height:22.6px;font-weight:400;color:#3c434a;letter-spacing:-0.200px;-webkit-text-stroke:0.3px;">270x270</div>
<div class="r" style="left:1498.5999999999997px;top:801.0800000000002px;width:112.5px;height:38.399999999999864px;background:#f2f3fb;border:1.5px solid #dcdde0;border-radius:6px;"></div>
<div class="t" style="left:1509.40px;top:809.94px;font-size:22.6px;line-height:22.6px;font-weight:400;color:#3c434a;letter-spacing:0.633px;-webkit-text-stroke:0.3px;">300x300</div>
<div class="r" style="left:21px;top:854.4699999999998px;width:2160px;height:62.58999999999992px;background:#ffffff;"></div>
<div class="r" style="left:83px;top:915.0599999999997px;width:830px;height:2.0px;background:#c3c4c7;"></div>
<div class="r" style="left:913px;top:915.0599999999997px;width:1268px;height:2.0px;background:#c3c4c7;"></div>
<div class="r" style="left:21.200000000000003px;top:859.8699999999999px;width:47.39999999999999px;height:47.299999999999955px;background:#f3f3fb;border:1.5px solid #d6d7da;border-radius:6px;box-shadow:0 1.5px 0 #c6c7ca;"></div>
<svg class="r" style="left:31.200000000000003px;top:867.5699999999997px;overflow:visible;overflow:visible" width="28.6" height="30.3" viewBox="0 0 43 46"><path d="M3.4,1.4 H25 L35.6,12 V42.4 Q35.6,44.6 33.4,44.6 H3.6 Q1.4,44.6 1.4,42.4 V3.6 Q1.4,1.4 3.6,1.4 Z" fill="none" stroke="#000" stroke-width="2.8" stroke-linejoin="round"/><path d="M25,1.4 V10.2 Q25,12.4 27.2,12.4 H35.6" fill="none" stroke="#000" stroke-width="2.8" stroke-linejoin="round"/><rect x="6" y="21.2" width="37" height="17" rx="3.2" fill="#000"/><text x="25" y="34.6" text-anchor="middle" font-family="Liberation Sans" font-weight="700" font-size="12.8" textLength="27.6" lengthAdjust="spacingAndGlyphs" fill="#fff" stroke="#fff" stroke-width="0.35">JPG</text></svg>
<div class="t" style="left:92.00px;top:872.61px;font-size:27px;line-height:27px;font-weight:400;color:#3c6fb0;letter-spacing:0.738px;-webkit-text-stroke:0.3px;">2024/08/d7183518-f5fa-39df-823c-b288c46424dc.jpg</div>
<div class="r" style="left:923.3px;top:863.6699999999998px;width:104.79999999999995px;height:38.399999999999864px;background:#f2f3fb;border:1.5px solid #dcdde0;border-radius:6px;"></div>
<div class="t" style="left:934.10px;top:872.53px;font-size:22.6px;line-height:22.6px;font-weight:400;color:#3c434a;letter-spacing:-0.650px;-webkit-text-stroke:0.3px;">150x150</div>
<div class="r" style="left:1041.8999999999999px;top:863.6699999999998px;width:112.70000000000005px;height:38.399999999999864px;background:#f2f3fb;border:1.5px solid #dcdde0;border-radius:6px;"></div>
<div class="t" style="left:1052.70px;top:872.53px;font-size:22.6px;line-height:22.6px;font-weight:400;color:#3c434a;letter-spacing:0.667px;-webkit-text-stroke:0.3px;">300x200</div>
<div class="r" style="left:1168.3999999999999px;top:863.6699999999998px;width:106.90000000000009px;height:38.399999999999864px;background:#f2f3fb;border:1.5px solid #dcdde0;border-radius:6px;"></div>
<div class="t" style="left:1179.20px;top:872.53px;font-size:22.6px;line-height:22.6px;font-weight:400;color:#3c434a;letter-spacing:-0.300px;-webkit-text-stroke:0.3px;">768x512</div>
<div class="r" style="left:1289.1px;top:863.6699999999998px;width:121.5px;height:38.399999999999864px;background:#f2f3fb;border:1.5px solid #dcdde0;border-radius:6px;"></div>
<div class="t" style="left:1299.90px;top:872.53px;font-size:22.6px;line-height:22.6px;font-weight:400;color:#3c434a;letter-spacing:0.029px;-webkit-text-stroke:0.3px;">1024x682</div>
<div class="r" style="left:21px;top:917.06px;width:2160px;height:62.58999999999992px;background:#f6f7f7;"></div>
<div class="r" style="left:83px;top:977.6499999999999px;width:830px;height:2.0px;background:#c3c4c7;"></div>
<div class="r" style="left:913px;top:977.6499999999999px;width:1268px;height:2.0px;background:#c3c4c7;"></div>
<div class="r" style="left:21.200000000000003px;top:922.46px;width:47.39999999999999px;height:47.299999999999955px;background:#f3f3fb;border:1.5px solid #d6d7da;border-radius:6px;box-shadow:0 1.5px 0 #c6c7ca;"></div>
<svg class="r" style="left:31.200000000000003px;top:930.1599999999999px;overflow:visible;overflow:visible" width="28.6" height="30.3" viewBox="0 0 43 46"><path d="M3.4,1.4 H25 L35.6,12 V42.4 Q35.6,44.6 33.4,44.6 H3.6 Q1.4,44.6 1.4,42.4 V3.6 Q1.4,1.4 3.6,1.4 Z" fill="none" stroke="#000" stroke-width="2.8" stroke-linejoin="round"/><path d="M25,1.4 V10.2 Q25,12.4 27.2,12.4 H35.6" fill="none" stroke="#000" stroke-width="2.8" stroke-linejoin="round"/><rect x="6" y="21.2" width="37" height="17" rx="3.2" fill="#000"/><text x="25" y="34.6" text-anchor="middle" font-family="Liberation Sans" font-weight="700" font-size="12.8" textLength="27.6" lengthAdjust="spacingAndGlyphs" fill="#fff" stroke="#fff" stroke-width="0.35">JPG</text></svg>
<div class="t" style="left:92.00px;top:935.20px;font-size:27px;line-height:27px;font-weight:400;color:#3c6fb0;letter-spacing:0.632px;-webkit-text-stroke:0.3px;">2024/08/f9a9d9bd-010c-37ee-92e3-cab88799c89e.jpg</div>
<div class="r" style="left:923.3px;top:926.26px;width:104.79999999999995px;height:38.399999999999864px;background:#f2f3fb;border:1.5px solid #dcdde0;border-radius:6px;"></div>
<div class="t" style="left:934.10px;top:935.12px;font-size:22.6px;line-height:22.6px;font-weight:400;color:#3c434a;letter-spacing:-0.650px;-webkit-text-stroke:0.3px;">150x150</div>
<div class="r" style="left:1041.8999999999999px;top:926.26px;width:112.70000000000005px;height:38.399999999999864px;background:#f2f3fb;border:1.5px solid #dcdde0;border-radius:6px;"></div>
<div class="t" style="left:1052.70px;top:935.12px;font-size:22.6px;line-height:22.6px;font-weight:400;color:#3c434a;letter-spacing:0.667px;-webkit-text-stroke:0.3px;">300x200</div>
<div class="r" style="left:1168.3999999999999px;top:926.26px;width:106.90000000000009px;height:38.399999999999864px;background:#f2f3fb;border:1.5px solid #dcdde0;border-radius:6px;"></div>
<div class="t" style="left:1179.20px;top:935.12px;font-size:22.6px;line-height:22.6px;font-weight:400;color:#3c434a;letter-spacing:-0.300px;-webkit-text-stroke:0.3px;">768x512</div>
<div class="r" style="left:1289.1px;top:926.26px;width:121.5px;height:38.399999999999864px;background:#f2f3fb;border:1.5px solid #dcdde0;border-radius:6px;"></div>
<div class="t" style="left:1299.90px;top:935.12px;font-size:22.6px;line-height:22.6px;font-weight:400;color:#3c434a;letter-spacing:0.029px;-webkit-text-stroke:0.3px;">1024x682</div>
</div>
<div class="r" style="left:962px;top:782px;width:2px;height:965px;background:#c3c4c7;"></div>
<div class="r" style="left:2229px;top:782px;width:2px;height:965px;background:#c3c4c7;"></div>
<div class="r" style="left:2231px;top:782px;width:49px;height:965px;background:#f8f8f8;"></div>
<div class="r" style="left:2252px;top:782px;width:1px;height:965px;background:#ececec;"></div>
<div class="r" style="left:2259px;top:1481px;width:15.5px;height:69px;background:#c1c1c1;border-radius:8px;"></div></div></body></html>
